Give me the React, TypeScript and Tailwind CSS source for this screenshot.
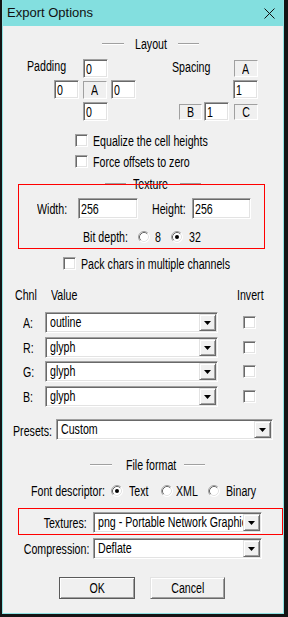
import React from "react";

const sunken =
  "box-border border border-t-[#a0a0a0] border-l-[#a0a0a0] border-b-white border-r-white shadow-[inset_1px_1px_0_#696969,inset_-1px_-1px_0_#e3e3e3]";
const staticBox =
  "box-border border border-t-[#a0a0a0] border-l-[#a0a0a0] border-b-white border-r-white bg-[#f0f0f0] flex items-center justify-center";
const raised =
  "box-border border border-t-[#e3e3e3] border-l-[#e3e3e3] border-b-[#696969] border-r-[#696969] shadow-[inset_1px_1px_0_#ffffff,inset_-1px_-1px_0_#a0a0a0] bg-[#f0f0f0]";
const etched = "box-border h-[2px] border-t border-b border-t-[#a0a0a0] border-b-white";

function T({ children, o = "l" }: { children: React.ReactNode; o?: "l" | "c" | "r" }) {
  const origin = o === "l" ? "origin-left" : o === "c" ? "origin-center" : "origin-right";
  return <span className={`inline-block scale-x-[0.76] ${origin}`}>{children}</span>;
}

function Field({ cls, value }: { cls: string; value: string }) {
  return (
    <div className={`${sunken} bg-white flex items-center pl-[2px] h-[19px] ${cls}`}>
      <T>{value}</T>
    </div>
  );
}

function Check({ cls = "" }: { cls?: string }) {
  return <div className={`${sunken} bg-white w-[13px] h-[13px] shrink-0 ${cls}`} />;
}

function Radio({ checked = false }: { checked?: boolean }) {
  return (
    <svg width="12" height="12" viewBox="0 0 12 12" className="shrink-0">
      <circle cx="6" cy="6" r="5.5" fill="#ffffff" />
      <path d="M2.11 9.89 A5.5 5.5 0 0 1 9.89 2.11" fill="none" stroke="#a0a0a0" strokeWidth="1" />
      <path d="M9.89 2.11 A5.5 5.5 0 0 1 2.11 9.89" fill="none" stroke="#ffffff" strokeWidth="1" />
      <path d="M2.82 9.18 A4.5 4.5 0 0 1 9.18 2.82" fill="none" stroke="#696969" strokeWidth="1" />
      <path d="M9.18 2.82 A4.5 4.5 0 0 1 2.82 9.18" fill="none" stroke="#e3e3e3" strokeWidth="1" />
      {checked && <circle cx="6" cy="6" r="2" fill="#000000" />}
    </svg>
  );
}

function Arrow() {
  return (
    <svg width="7" height="4" viewBox="0 0 7 4">
      <polygon points="0,0 7,0 3.5,4" fill="#000000" />
    </svg>
  );
}

function Select({ cls, value }: { cls: string; value: string }) {
  return (
    <div className={`${sunken} bg-white flex items-center h-[21px] p-[1px] ${cls}`}>
      <div className="flex-1 overflow-hidden whitespace-nowrap pl-[3px] leading-[17px]">
        <T>{value}</T>
      </div>
      <div className={`${raised} w-[17px] h-[17px] flex items-center justify-center shrink-0`}>
        <Arrow />
      </div>
    </div>
  );
}

export default function App() {
  return (
    <div className="w-[288px] h-[617px] bg-[#141414] overflow-hidden">
      <div className="ml-[2px] w-[282px] h-[614px] box-border border-x border-b border-[#8ee2e2] flex flex-col text-black">
        {/* Title bar */}
        <div className="h-[26px] bg-[#83dfdf] flex items-center justify-between shrink-0">
          <span className="pl-[4px] font-['Liberation_Sans',Arial,sans-serif] text-[13px] leading-[16px] text-[#111]">
            Export Options
          </span>
          <svg width="11" height="11" viewBox="0 0 11 11" className="mr-[8px] mt-[1px]">
            <path d="M0.5 0.5 L10.5 10.5 M10.5 0.5 L0.5 10.5" stroke="#111" strokeWidth="1" />
          </svg>
        </div>

        {/* Content */}
        <div className="relative flex-1 bg-[#f0f0f0] whitespace-nowrap font-['Liberation_Sans',Arial,sans-serif] text-[14px] leading-[16px]">
          {/* Layout header */}
          <div className="mt-[10px] h-[16px] flex items-center">
            <div className={`${etched} ml-[99px] w-[22px]`} />
            <span className="ml-[11px] w-[43px]"><T>Layout</T></span>
            <div className={`${etched} w-[21px]`} />
          </div>

          {/* Padding / spacing row 1 */}
          <div className="mt-[7px] h-[19px] flex items-center">
            <span className="ml-[24px] w-[56px] mb-[5px]"><T>Padding</T></span>
            <Field cls="w-[25px]" value="0" />
            <span className="ml-[64px] w-[62px] mb-[3px]"><T>Spacing</T></span>
            <div className={`${staticBox} w-[24px] h-[17px]`}><T o="c">A</T></div>
          </div>
          {/* row 2 */}
          <div className="mt-[2px] h-[19px] flex items-center">
            <Field cls="ml-[51px] w-[25px]" value="0" />
            <div className={`${staticBox} ml-[4px] w-[24px] h-[18px]`}><T o="c">A</T></div>
            <Field cls="ml-[4px] w-[25px]" value="0" />
            <Field cls="ml-[97px] w-[25px]" value="1" />
          </div>
          {/* row 3 */}
          <div className="mt-[3px] h-[19px] flex items-center">
            <Field cls="ml-[80px] w-[25px]" value="0" />
            <div className={`${staticBox} ml-[71px] w-[23px] h-[16px]`}><T o="c">B</T></div>
            <Field cls="ml-[2px] w-[25px]" value="1" />
            <div className={`${staticBox} ml-[5px] w-[24px] h-[16px]`}><T o="c">C</T></div>
          </div>

          {/* Checkboxes */}
          <div className="mt-[13px] h-[13px] flex items-center">
            <Check cls="ml-[72px]" />
            <span className="ml-[5px]"><T>Equalize the cell heights</T></span>
          </div>
          <div className="mt-[8px] h-[13px] flex items-center">
            <Check cls="ml-[72px]" />
            <span className="ml-[5px]"><T>Force offsets to zero</T></span>
          </div>

          {/* Texture header */}
          <div className="mt-[8px] h-[16px] flex items-center">
            <div className={`${etched} ml-[102px] w-[21px]`} />
            <span className="ml-[7px] w-[47px]"><T>Texture</T></span>
            <div className={`${etched} w-[21px]`} />
          </div>

          {/* Width / height */}
          <div className="mt-[6px] h-[21px] flex items-center">
            <span className="ml-[34px] w-[41px]"><T>Width:</T></span>
            <Field cls="w-[60px] h-[21px]" value="256" />
            <span className="ml-[14px] w-[40px]"><T>Height:</T></span>
            <Field cls="w-[59px] h-[21px]" value="256" />
          </div>

          {/* Bit depth */}
          <div className="mt-[10px] h-[16px] flex items-center">
            <span className="ml-[80px] w-[55px]"><T>Bit depth:</T></span>
            <Radio />
            <span className="ml-[5px] w-[16px]"><T>8</T></span>
            <Radio checked />
            <span className="ml-[6px]"><T>32</T></span>
          </div>

          {/* Pack chars */}
          <div className="mt-[12px] h-[13px] flex items-center">
            <Check cls="ml-[60px]" />
            <span className="ml-[5px]"><T>Pack chars in multiple channels</T></span>
          </div>

          {/* Channel header */}
          <div className="mt-[17px] h-[16px] flex items-center">
            <span className="ml-[12px] w-[36px]"><T>Chnl</T></span>
            <span className="w-[186px]"><T>Value</T></span>
            <span><T>Invert</T></span>
          </div>

          {/* Channel rows */}
          <div className="mt-[9px] h-[21px] flex items-center">
            <span className="ml-[20px] w-[22px]"><T>A:</T></span>
            <Select cls="w-[173px]" value="outline" />
            <Check cls="ml-[25px]" />
          </div>
          <div className="mt-[4px] h-[21px] flex items-center">
            <span className="ml-[20px] w-[22px]"><T>R:</T></span>
            <Select cls="w-[173px]" value="glyph" />
            <Check cls="ml-[25px]" />
          </div>
          <div className="mt-[3px] h-[21px] flex items-center">
            <span className="ml-[20px] w-[22px]"><T>G:</T></span>
            <Select cls="w-[173px]" value="glyph" />
            <Check cls="ml-[25px]" />
          </div>
          <div className="mt-[4px] h-[21px] flex items-center">
            <span className="ml-[20px] w-[22px]"><T>B:</T></span>
            <Select cls="w-[173px]" value="glyph" />
            <Check cls="ml-[25px]" />
          </div>

          {/* Presets */}
          <div className="mt-[12px] h-[21px] flex items-center">
            <span className="ml-[10px] w-[43px] mt-[2px]"><T>Presets:</T></span>
            <Select cls="w-[217px]" value="Custom" />
          </div>

          {/* File format header */}
          <div className="mt-[17px] h-[16px] flex items-center">
            <div className={`${etched} ml-[87px] w-[22px]`} />
            <span className="ml-[14px] w-[58px]"><T>File format</T></span>
            <div className={`${etched} w-[21px]`} />
          </div>

          {/* Font descriptor */}
          <div className="mt-[10px] h-[16px] flex items-center">
            <span className="ml-[28px] w-[80px]"><T>Font descriptor:</T></span>
            <Radio checked />
            <span className="ml-[6px] w-[32px]"><T>Text</T></span>
            <Radio />
            <span className="ml-[3px] w-[32px]"><T>XML</T></span>
            <Radio />
            <span className="ml-[6px]"><T>Binary</T></span>
          </div>

          {/* Textures */}
          <div className="mt-[13px] h-[21px] flex items-center">
            <span className="w-[84px] text-right"><T o="r">Textures:</T></span>
            <Select cls="ml-[6px] w-[169px]" value="png - Portable Network Graphics" />
          </div>
          <div className="mt-[5px] h-[21px] flex items-center">
            <span className="w-[84px] text-right"><T o="r">Compression:</T></span>
            <Select cls="ml-[6px] w-[169px]" value="Deflate" />
          </div>

          {/* Buttons */}
          <div className="mt-[18px] h-[22px] flex items-center">
            <button className="ml-[56px] w-[76px] h-[22px] box-border border border-[#5a5a5a] shadow-[inset_1px_1px_0_#ffffff,inset_-1px_-1px_0_#a0a0a0] bg-[#f0f0f0] flex items-center justify-center">
              <T o="c">OK</T>
            </button>
            <button className={`${raised} ml-[15px] w-[75px] h-[22px] flex items-center justify-center`}>
              <T o="c">Cancel</T>
            </button>
          </div>

          {/* Red annotation boxes */}
          <div className="absolute left-[15px] top-[158px] w-[247px] h-[65px] border border-[#ff0000] pointer-events-none" />
          <div className="absolute left-[15px] top-[482px] w-[265px] h-[27px] border border-[#ff0000] pointer-events-none" />
        </div>
      </div>
    </div>
  );
}
